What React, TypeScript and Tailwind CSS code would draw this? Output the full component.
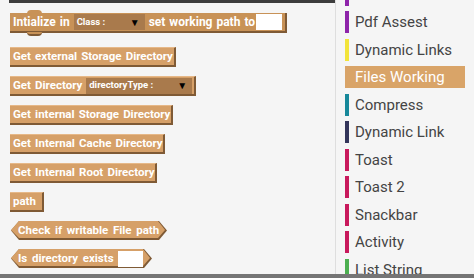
import React from "react"

const font = { fontFamily: "Roboto, 'Noto Sans', sans-serif" }

function Block({ children, w }: { children: React.ReactNode; w: string }) {
  return (
    <div
      className={`flex h-[20px] items-center whitespace-nowrap border-b-2 border-r-2 border-[#7f5a35] border-t border-t-[#e6b888] bg-[#d6a068] pl-[3px] text-[11.5px] font-bold text-white [word-spacing:1.3px] ${w}`}
    >
      {children}
    </div>
  )
}

function Dropdown({ label, w }: { label: string; w: string }) {
  return (
    <span className={`ml-[4px] flex h-[16px] items-center justify-between whitespace-nowrap bg-[#a97a4c] pl-[3px] pr-[5px] text-[9.5px] font-bold [word-spacing:0] ${w}`}>
      {label}
      <span className="text-[10px] text-black">▼</span>
    </span>
  )
}

function Hex({ children, w }: { children: React.ReactNode; w: number }) {
  return (
    <div className="relative flex h-[19px] items-center whitespace-nowrap pl-[8px] text-[11.5px] font-bold text-white [word-spacing:1.8px]" style={{ width: w }}>
      <svg className="absolute inset-0" width={w} height={19} viewBox={`0 0 ${w} 19`}>
        <polygon points={`1,9.5 9,0 ${w - 9},0 ${w - 1},9.5 ${w - 9},19 9,19`} fill="#7f5a35" />
        <polygon points={`1,9 9,0 ${w - 10},0 ${w - 3},9 ${w - 10},17 9,17`} fill="#d6a068" />
      </svg>
      <span className="relative flex items-center">{children}</span>
    </div>
  )
}

const items = [
  { t: "J", c: "#8e24aa" },
  { t: "Pdf Assest", c: "#8e24aa" },
  { t: "Dynamic Links", c: "#f2e43a" },
  { t: "Files Working", c: "", on: true },
  { t: "Compress", c: "#17889a" },
  { t: "Dynamic Link", c: "#33355a" },
  { t: "Toast", c: "#c8195c" },
  { t: "Toast 2", c: "#c8195c" },
  { t: "Snackbar", c: "#c8195c" },
  { t: "Activity", c: "#c8195c" },
  { t: "List String", c: "#4caf50" },
]

export default function App() {
  return (
    <div className="relative h-[278px] w-[474px] overflow-hidden bg-[#f5f5f5]" style={font}>
      <div className="flex h-full">
        <div className="flex w-[336px] flex-col border-r border-[#dedede]">
          <div className="ml-[9px] h-[3px] w-[326px] bg-[#3d3d3d]" />
          <div className="flex flex-col gap-[9px] pl-[10px] pt-[10px]">
            <div className="relative mb-[5px] flex h-[20px] w-[277px] items-center whitespace-nowrap border-b-2 border-r-2 border-[#7f5a35] bg-[#c89257] pl-[3px] text-[12px] font-bold text-white [word-spacing:1px]">
              <span className="absolute left-[17px] top-[-3px] h-[4px] w-[15px] rounded-t-[5px] bg-[#c89257]" />
              <span className="absolute bottom-[-5px] left-[17px] h-[4px] w-[15px] rounded-b-[5px] border-b-2 border-[#7f5a35] bg-[#c89257]" />
              <span>Intialize in</span>
              <Dropdown label="Class :" w="w-[71px]" />
              <span className="ml-[4px]">set working path to</span>
              <span className="ml-auto mr-[3px] h-[16px] w-[26px] bg-white" />
            </div>
            <Block w="w-[166px]">Get external Storage Directory</Block>
            <Block w="w-[186px]">
              Get Directory
              <Dropdown label="directoryType :" w="w-[106px]" />
            </Block>
            <Block w="w-[163px]">Get internal Storage Directory</Block>
            <Block w="w-[155px]">Get Internal Cache Directory</Block>
            <Block w="w-[147px]">Get Internal Root Directory</Block>
            <Block w="w-[34px]">path</Block>
            <Hex w={158}>Check if writable File path</Hex>
            <Hex w={143}>
              Is directory exists
              <span className="ml-[4px] h-[16px] w-[25px] bg-white" />
            </Hex>
          </div>
        </div>
        <div className="-mt-[19px] flex flex-1 flex-col pl-[9px]">
          {items.map((it) => (
            <div key={it.t} className="flex h-[27.5px] shrink-0 items-center">
              {it.on ? (
                <div className="flex h-[22px] w-[120px] items-center bg-[#d9a468] pl-[10px] text-[15px] text-white">{it.t}</div>
              ) : (
                <>
                  <span className="h-[22px] w-[4px]" style={{ background: it.c }} />
                  <span className="ml-[6px] text-[15px] text-[#444]">{it.t}</span>
                </>
              )}
            </div>
          ))}
        </div>
      </div>
      <div className="absolute bottom-0 left-0 h-[4px] w-full bg-[#757575]" />
    </div>
  )
}
